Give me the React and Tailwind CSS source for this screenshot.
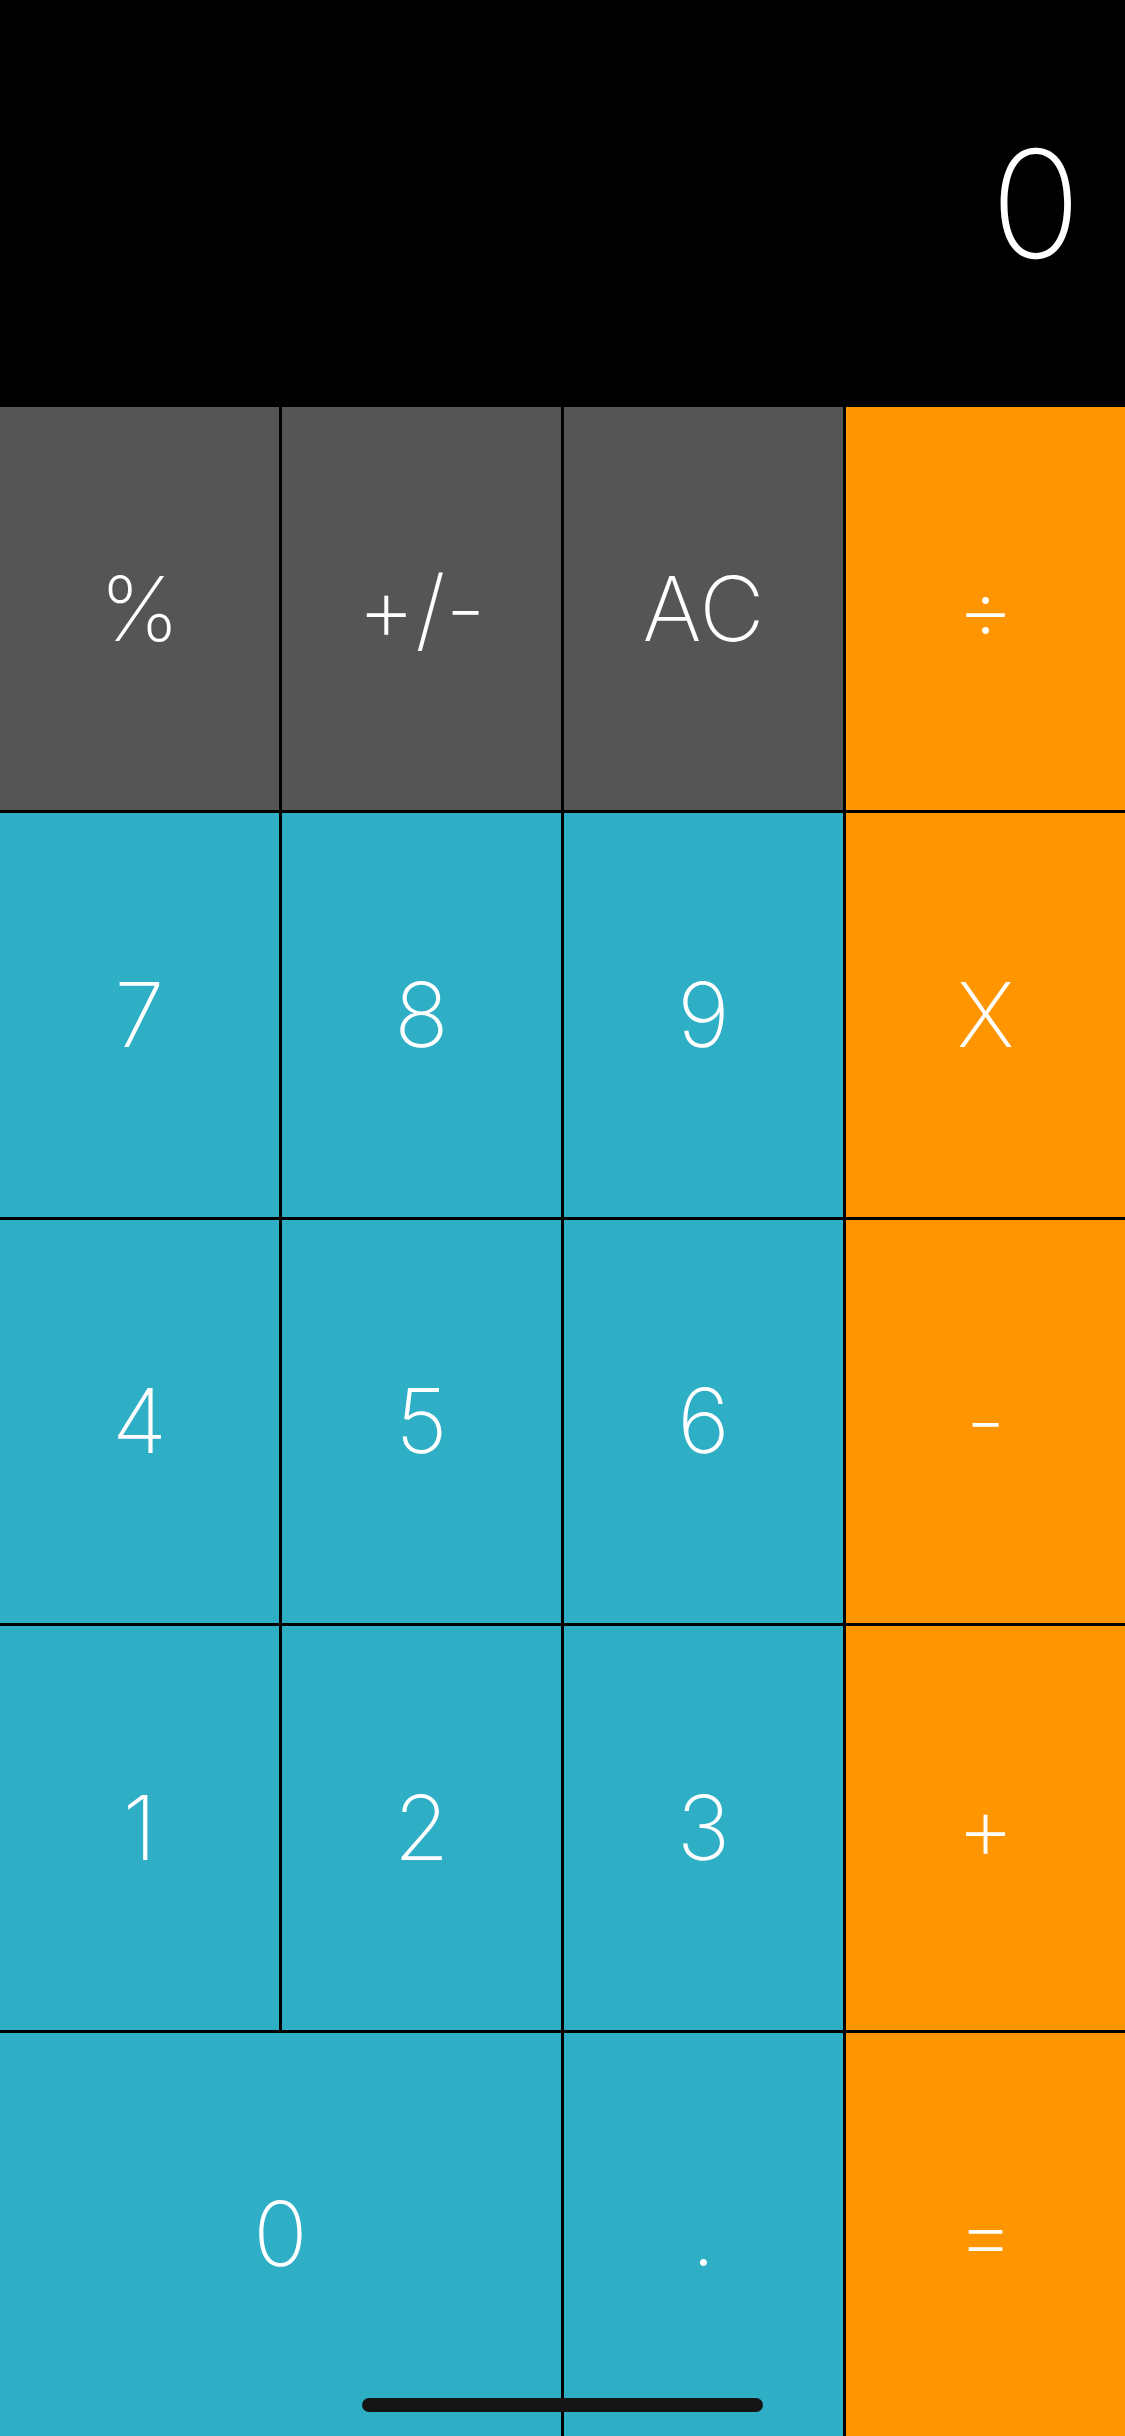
import React from "react";

const keys = [
  { label: "%", bg: "bg-[#555555]" },
  { label: "+/-", bg: "bg-[#555555]" },
  { label: "AC", bg: "bg-[#555555]" },
  { label: "÷", bg: "bg-[#ff9500]" },
  { label: "7", bg: "bg-[#2fafc6]" },
  { label: "8", bg: "bg-[#2fafc6]" },
  { label: "9", bg: "bg-[#2fafc6]" },
  { label: "X", bg: "bg-[#ff9500]" },
  { label: "4", bg: "bg-[#2fafc6]" },
  { label: "5", bg: "bg-[#2fafc6]" },
  { label: "6", bg: "bg-[#2fafc6]" },
  { label: "-", bg: "bg-[#ff9500]" },
  { label: "1", bg: "bg-[#2fafc6]" },
  { label: "2", bg: "bg-[#2fafc6]" },
  { label: "3", bg: "bg-[#2fafc6]" },
  { label: "+", bg: "bg-[#ff9500]" },
  { label: "0", bg: "bg-[#2fafc6]", wide: true },
  { label: ".", bg: "bg-[#2fafc6]" },
  { label: "=", bg: "bg-[#ff9500]" },
];

export default function App() {
  return (
    <div
      className="relative w-[1125px] h-[2436px] bg-black flex flex-col overflow-hidden text-white"
      style={{ fontFamily: "Inter, 'Open Sans', sans-serif" }}
    >
      <div className="h-[407px] flex items-center justify-end pr-[44px] shrink-0">
        <span className="text-[150px] leading-none [font-weight:150]">0</span>
      </div>
      <div className="flex-1 grid grid-cols-4 grid-rows-5 gap-[3px]">
        {keys.map((k) => (
          <button
            key={k.label}
            className={`${k.bg} ${k.wide ? "col-span-2" : ""} flex items-center justify-center text-[90px] leading-none [font-weight:150] text-white`}
          >
            {k.label}
          </button>
        ))}
      </div>
      <div className="absolute left-[362px] bottom-[24px] w-[401px] h-[14px] rounded-full bg-[#151515]" />
    </div>
  );
}
